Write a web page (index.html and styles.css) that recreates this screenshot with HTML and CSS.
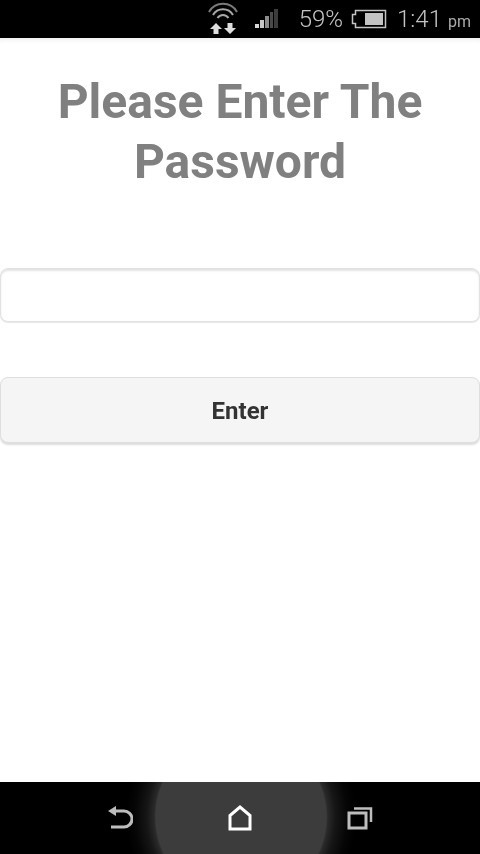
FILE: index.html
```html
<!DOCTYPE html>
<html lang="en">
<head>
<meta charset="utf-8">
<title>Enter Password</title>
<link rel="stylesheet" href="styles.css">
</head>
<body>
<div class="screen">
  <header class="status">
    <svg class="ic-wifi" width="32" height="36" viewBox="0 0 32 36">
      <g fill="none" stroke="#7a7a7a" stroke-width="2">
        <path d="M2 11A16 16 0 0 1 30 11"/>
      </g>
      <g fill="none" stroke="#a8a8a8" stroke-width="2">
        <path d="M6 14A11.500 11.500 0 0 1 26 14"/>
        <path d="M10.500 17A6.500 6.500 0 0 1 21.500 17"/>
      </g>
      <path d="M9 22l6 6h-3.500v5h-5v-5H3z" fill="#dedede"/>
      <path d="M23 33l-6-6h3.500v-5h5v5H29z" fill="#dedede"/>
    </svg>
    <svg class="ic-signal" width="24" height="20" viewBox="0 0 24 20">
      <rect x="0" y="15" width="4" height="4" fill="#d8d8d8"/>
      <rect x="5" y="11" width="4" height="8" fill="#c8c8c8"/>
      <rect x="10" y="7" width="4" height="12" fill="#8c8c8c"/>
      <rect x="15" y="3" width="3" height="16" fill="#4a4a4a"/>
      <rect x="19" y="0" width="4" height="19" fill="#3c3c3c"/>
    </svg>
    <span class="pct">59%</span>
    <svg class="ic-batt" width="37" height="20" viewBox="0 0 37 20">
      <path d="M5.500 1.500h30v17h-30v-4h-3v-9h3z" fill="none" stroke="#c4c4c4" stroke-width="1.500"/>
      <rect x="15" y="4" width="18" height="12" fill="#c4c4c4"/>
    </svg>
    <span class="time">1:41</span>
    <span class="ampm">pm</span>
  </header>

  <main class="content">
    <h1 class="title">Please Enter The Password</h1>
    <input class="field" type="password" aria-label="Password">
    <button class="btn" type="button"><span class="btn-label">Enter</span></button>
  </main>

  <nav class="navbar">
    <div class="glow"></div>
    <svg class="nav-ic" width="26" height="26" viewBox="0 0 26 26">
      <path d="M10 6H18a7 7 0 0 1 0 16H5" transform="translate(-1 0)" fill="none" stroke="#bdbdbd" stroke-width="3"/>
      <path d="M1 6L9 1v10z" fill="#bdbdbd"/>
    </svg>
    <svg class="nav-ic" width="24" height="26" viewBox="0 0 24 26">
      <path d="M2 24V10.500L12 2l10 8.500V24z" fill="none" stroke="#fff" stroke-width="3"/>
    </svg>
    <svg class="nav-ic" width="26" height="24" viewBox="0 0 26 24">
      <rect x="2" y="7" width="17" height="15" fill="none" stroke="#bdbdbd" stroke-width="3"/>
      <path d="M7 2.500H24V16" fill="none" stroke="#bdbdbd" stroke-width="2.500"/>
    </svg>
  </nav>
</div>
</body>
</html>
```

FILE: styles.css
```css
* { box-sizing: border-box; }
html, body { margin: 0; padding: 0; }
body { font-family: Roboto, "Liberation Sans", sans-serif; background: #fff; }
.screen { width: 480px; height: 854px; display: flex; flex-direction: column; overflow: hidden; }

.status {
  height: 38px; flex: none; background: #000; color: #c4c4c4;
  display: flex; align-items: center; justify-content: flex-end;
  padding-right: 9px; font-weight: 300;
}
.ic-wifi { margin-right: 16px; }
.ic-signal { margin-right: 20px; margin-top: -1px; }
.pct { font-size: 24px; margin-right: 7px; will-change: opacity; }
.ic-batt { margin-right: 10px; margin-top: -1px; }
.time { font-size: 24px; margin-right: 6px; will-change: opacity; }
.ampm { font-size: 16px; margin-top: 5px; font-weight: 400; color: #aaa; will-change: opacity; }

.content {
  flex: 1; display: flex; flex-direction: column;
  box-shadow: inset 0 5px 4px -3px #eee;
}
.title {
  margin: 34px 0 0; padding: 0 40px; text-align: center;
  font-size: 48px; line-height: 60px; font-weight: 700; color: #808080;
  will-change: opacity;
}
.field {
  display: block; width: 100%; height: 54px; margin-top: 76px;
  background: #fff; border: 1px solid #e2e2e2; border-radius: 8px;
  box-shadow: inset 0 2px 2px #e4e4e4, 0 1px 1px #e8e8e8; outline: none;
}
.btn {
  display: block; width: 100%; height: 66px; margin-top: 55px; padding: 2px 0 0;
  background: #f5f5f5; border: 1px solid #dedede; border-radius: 8px;
  box-shadow: 0 2px 2px #ddd;
  font-family: inherit; font-size: 24px; font-weight: 700; color: #333;
}
.btn-label { display: block; will-change: opacity; }

.navbar {
  position: relative; height: 72px; flex: none; background: #000; overflow: hidden;
  display: flex; align-items: center; justify-content: center; gap: 95px;
}
.glow {
  position: absolute; left: 126px; top: -80px; width: 230px; height: 230px; border-radius: 50%;
  background: radial-gradient(circle closest-side, #3c3c3c 0, #3c3c3c 74%, #2a2a2a 75.500%, #161616 82%, #060606 92%, rgba(0,0,0,0) 100%);
}
.nav-ic { position: relative; }
```
